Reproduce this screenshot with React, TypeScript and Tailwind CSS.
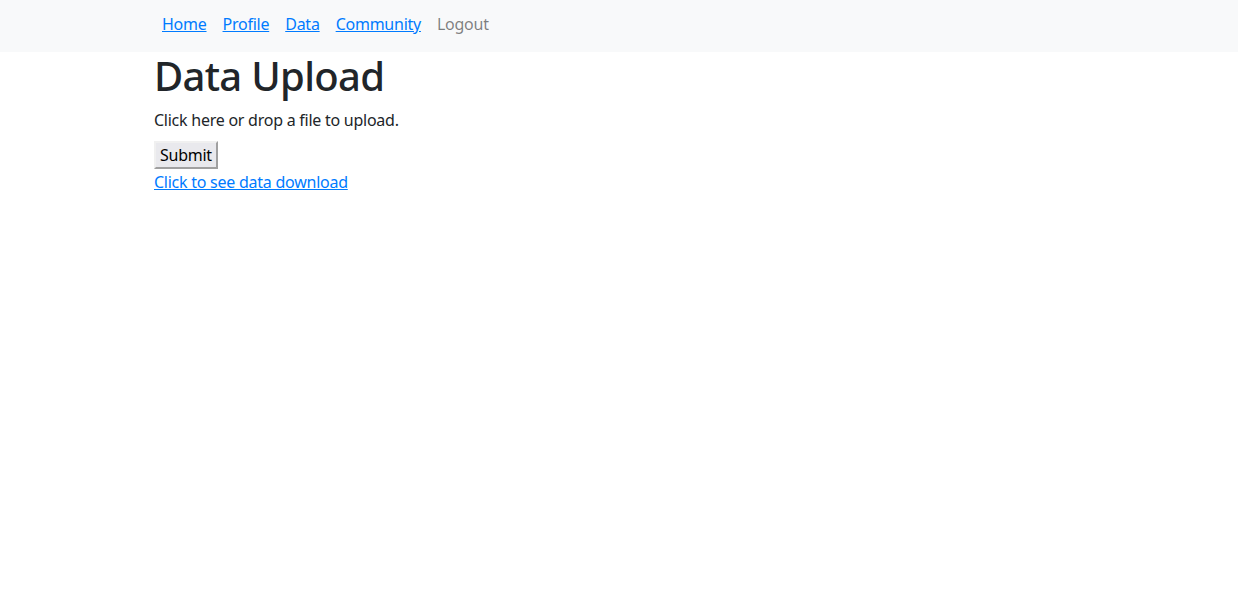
import React from "react";

const font = { fontFamily: '"Noto Sans", "Liberation Sans", sans-serif' };

export default function App() {
  return (
    <div className="min-h-[612px] bg-white text-[#212529] text-[16px] leading-6 tracking-[-0.25px]" style={font}>
      <nav className="bg-[#f8f9fa] h-[52px]">
        <div className="max-w-[960px] mx-auto px-[15px] h-full flex items-center pb-1">
          <ul className="flex">
            <li><a href="#" className="block px-2 py-2 text-[#007bff] underline">Home</a></li>
            <li><a href="#" className="block px-2 py-2 text-[#007bff] underline">Profile</a></li>
            <li><a href="#" className="block px-2 py-2 text-[#007bff] underline">Data</a></li>
            <li><a href="#" className="block px-2 py-2 text-[#007bff] underline">Community</a></li>
            <li><span className="block px-2 py-2 text-[rgba(0,0,0,0.5)]">Logout</span></li>
          </ul>
        </div>
      </nav>
      <div className="max-w-[960px] mx-auto px-[15px]">
        <h1 className="text-[40px] leading-[1.2] font-medium mb-2 tracking-[-0.7px]">Data Upload</h1>
        <div>Click here or drop a file to upload.</div>
        <button className="mt-[9px] block h-[28px] px-[4px] bg-[#e9e9ed] text-black border-2 border-t-[#f0f0f0] border-l-[#f0f0f0] border-r-[#a0a0a0] border-b-[#a0a0a0] leading-none">Submit</button>
        <a href="#" className="block mt-[1px] text-[#007bff] underline">Click to see data download</a>
      </div>
    </div>
  );
}
